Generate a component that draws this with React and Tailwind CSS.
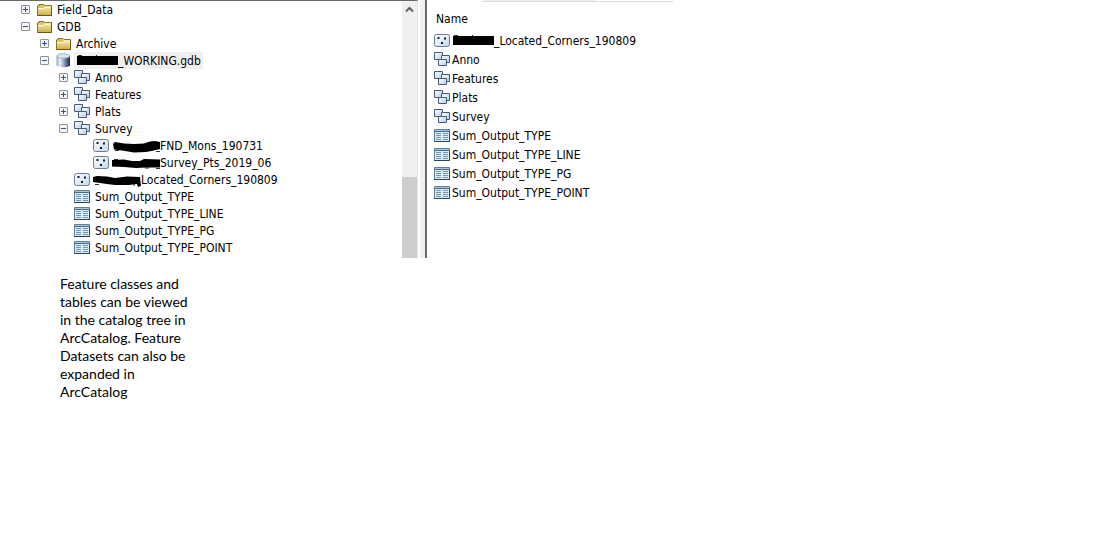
import React from "react";

function FolderIcon() {
  return (
    <svg width="16" height="16" viewBox="-1 0 16 16" className="shrink-0" aria-hidden="true">
      <defs>
        <linearGradient id="folder" x1="0" y1="0" x2="0" y2="1">
          <stop offset="0" stopColor="#f8ecac" />
          <stop offset="1" stopColor="#d2b04a" />
        </linearGradient>
      </defs>
      <path d="M.5 13.500V4l.5-.5h1v-1h5l1 1h6.500v10z" fill="#dcc263" stroke="#8a7220" />
      <path d="M1 13V6.500h5.500l1.500-2h6V13z" fill="url(#folder)" />
      <path d="M1 6.500h5.500l1.500-1.500h6" fill="none" stroke="#fffbe0" />
      <path d="M.5 13.500h14V4" fill="none" stroke="#6b5816" />
    </svg>
  );
}

function DatabaseIcon() {
  return (
    <svg width="16" height="16" viewBox="-1 0 16 16" className="shrink-0" aria-hidden="true">
      <defs>
        <linearGradient id="cylinder">
          <stop offset="0" stopColor="#8c9fba" />
          <stop offset=".25" stopColor="#f0f5fa" />
          <stop offset=".6" stopColor="#8296b4" />
          <stop offset="1" stopColor="#17253f" />
        </linearGradient>
      </defs>
      <path d="M.5 3v9c0 3 13.500 3 13.500 0V3z" fill="url(#cylinder)" />
      <ellipse cx="7.250" cy="3" rx="6.500" ry="2.300" fill="#dbe5f0" stroke="#8798b2" strokeWidth=".7" />
    </svg>
  );
}

function DatasetIcon() {
  return (
    <svg width="16" height="16" viewBox="0 0 16 16" className="shrink-0" aria-hidden="true">
      <defs>
        <linearGradient id="pane" x1="0" y1="0" x2="1" y2="1">
          <stop offset="0" stopColor="#ffffff" />
          <stop offset="1" stopColor="#b4cdec" />
        </linearGradient>
      </defs>
      <g fill="url(#pane)" stroke="#475a76">
        <path d="M.5.500h8v7h-8z" />
        <path d="M7.500 3.500h8v7h-8z" />
        <path d="M4.500 7.500h8v6h-8z" />
      </g>
    </svg>
  );
}

function PointsIcon() {
  return (
    <svg width="16" height="16" viewBox="0 0 16 16" className="shrink-0" aria-hidden="true">
      <defs>
        <linearGradient id="points" x1="0" y1="0" x2="1" y2="1">
          <stop offset="0" stopColor="#ffffff" />
          <stop offset="1" stopColor="#c3d6ee" />
        </linearGradient>
      </defs>
      <rect x=".5" y="1.500" width="15" height="12" rx="2" fill="url(#points)" stroke="#6c7c98" />
      <path d="M3.500 4h2v2h-2zM10 4.500h2v2h-2zM7 9h2v2H7z" fill="#111827" />
    </svg>
  );
}

function TableIcon() {
  return (
    <svg width="16" height="16" viewBox="0 0 16 16" className="shrink-0" aria-hidden="true">
      <path d="M.5 1.500h15v12H.5z" fill="#d9ecfa" stroke="#5c7f9c" />
      <path d="M1 2h14v1H1z" fill="#a9c6dc" />
      <path d="M0 3.500h16" stroke="#4a6d8a" />
      <path d="M15.500 4v9.500H0" fill="none" stroke="#2c4558" />
      <path d="M2 5.500h5M2 7.500h5M2 9.500h5M2 11.500h5M9 5.500h5M9 7.500h5M9 9.500h5M9 11.500h5" stroke="#7795ae" />
    </svg>
  );
}

const ICONS = {
  folder: FolderIcon,
  database: DatabaseIcon,
  dataset: DatasetIcon,
  points: PointsIcon,
  table: TableIcon,
};

const MARKS = {
  bar: "M1 3h41v9H1z",
  brushA: "M1 6l2-2 9 1.500 10 .5 10-.5 6-2 5-.5 5 1v7l-6 1.500-8 1.500-12 .5-12-2-8-1z",
  brushB: "M0 5l12-.5 8 1.500 8 0 4-2 16 .5v8h-14l-10 .5-12-1-12-.5z",
  brushC: "M0 5l4-1 10 .5 8 1.500 12-1.500 13 .5 1 9-3 1-1-3-8 1-14 0-8-1-14-2z",
};

const SPECKS = {
  bar: "M2 2.500h4M20 2.500h1",
  brushA: "M3 12.500h4M44 13.500h4",
  brushB: "M2 4.500h4M33 13h4M44 13.500h4",
  brushC: "M2 12.500h4M40 13h2",
};

function Redaction({ shape }) {
  return (
    <svg
      width={shape === "bar" ? 42 : 48}
      height="16"
      viewBox={shape === "bar" ? "0 0 42 16" : "0 0 48 16"}
      className="shrink-0"
      role="img"
      aria-label="Redacted"
    >
      <path d={SPECKS[shape]} stroke="#333333" />
      <path d={MARKS[shape]} fill="#000000" />
    </svg>
  );
}

function Expander({ open, label }) {
  return (
    <button
      type="button"
      aria-expanded={open}
      aria-label={(open ? "Collapse " : "Expand ") + label}
      className="size-[9px] shrink-0"
    >
      <svg width="9" height="9" viewBox="0 0 9 9" className="block" aria-hidden="true">
        <rect x=".5" y=".5" width="8" height="8" rx=".5" fill="#f6f6f6" stroke="#919191" />
        <path d="M2 4.500h5" stroke="#2f4fa5" />
        {!open && <path d="M4.500 2v5" stroke="#2f4fa5" />}
      </svg>
    </button>
  );
}

const TREE = [
  { icon: "folder", name: "Field_Data", open: false },
  {
    icon: "folder",
    name: "GDB",
    open: true,
    children: [
      { icon: "folder", name: "Archive", open: false },
      {
        icon: "database",
        name: "_WORKING.gdb",
        mark: "bar",
        selected: true,
        open: true,
        children: [
          { icon: "dataset", name: "Anno", open: false },
          { icon: "dataset", name: "Features", open: false },
          { icon: "dataset", name: "Plats", open: false },
          {
            icon: "dataset",
            name: "Survey",
            open: true,
            children: [
              { icon: "points", name: "FND_Mons_190731", mark: "brushA" },
              { icon: "points", name: "Survey_Pts_2019_06", mark: "brushB" },
            ],
          },
          { icon: "points", name: "Located_Corners_190809", mark: "brushC" },
          { icon: "table", name: "Sum_Output_TYPE" },
          { icon: "table", name: "Sum_Output_TYPE_LINE" },
          { icon: "table", name: "Sum_Output_TYPE_PG" },
          { icon: "table", name: "Sum_Output_TYPE_POINT" },
        ],
      },
    ],
  },
];

const CONTENTS = [
  { icon: "points", name: "_Located_Corners_190809", mark: "bar" },
  { icon: "dataset", name: "Anno" },
  { icon: "dataset", name: "Features" },
  { icon: "dataset", name: "Plats" },
  { icon: "dataset", name: "Survey" },
  { icon: "table", name: "Sum_Output_TYPE" },
  { icon: "table", name: "Sum_Output_TYPE_LINE" },
  { icon: "table", name: "Sum_Output_TYPE_PG" },
  { icon: "table", name: "Sum_Output_TYPE_POINT" },
];

function labelClass(node) {
  if (node.selected) return "bg-[#f0f0f0] px-0.5";
  return node.mark ? "" : "px-0.5";
}

function TreeNode({ node }) {
  const Icon = ICONS[node.icon];
  const expandable = node.open !== undefined;
  return (
    <li>
      <div className="flex h-[17px] items-center">
        <span className="flex w-[15px] shrink-0">
          {expandable && <Expander open={node.open} label={node.name} />}
        </span>
        <Icon />
        <span className={"ml-[3px] flex h-full items-center whitespace-nowrap " + labelClass(node)}>
          {node.mark && <Redaction shape={node.mark} />}
          {node.name}
        </span>
      </div>
      {node.children && (
        <ul className="pl-[19px]">
          {node.children.map((child) => (
            <TreeNode key={child.name} node={child} />
          ))}
        </ul>
      )}
    </li>
  );
}

function ScrollBar() {
  return (
    <div className="flex w-[15px] shrink-0 flex-col bg-[#f0f0f0]">
      <button type="button" aria-label="Scroll up" className="flex h-[17px] items-center justify-center">
        <svg width="9" height="7" viewBox="0 0 9 7" aria-hidden="true">
          <path d="M1 5.500L4.500 2 8 5.500" fill="none" stroke="#606060" strokeWidth="2" />
        </svg>
      </button>
      <div className="h-[159px]" />
      <div className="flex-1 bg-[#cdcdcd]" />
    </div>
  );
}

export default function App() {
  return (
    <main className="min-h-screen bg-white font-['DejaVu_Sans_Condensed','Open_Sans',sans-serif] text-xs text-black">
      <div className="flex">
        <nav aria-label="Catalog tree" className="flex w-[418px] shrink-0 border-t border-r border-t-[#696969] border-r-[#e3e3e3]">
          <ul className="flex-1 pb-0.5 pl-[21px]">
            {TREE.map((node) => (
              <TreeNode key={node.name} node={node} />
            ))}
          </ul>
          <ScrollBar />
        </nav>
        <div className="ml-0.5 w-[7px] shrink-0 border-r-2 border-[#696969] bg-[#f0f0f0]" />
        <section aria-label="Contents" className="flex-1 pl-[7px]">
          <div className="ml-[49px] flex h-[2px] max-w-[190px] border-b border-[#d9d9d9]">
            <div className="w-[112px] bg-[#f0f0f0]" />
          </div>
          <h2 className="flex h-[29px] items-center pt-1 pl-0.5 font-normal">Name</h2>
          <ul>
            {CONTENTS.map((item) => {
              const Icon = ICONS[item.icon];
              return (
                <li key={item.name} className="flex h-[19px] items-center gap-0.5 whitespace-nowrap">
                  <Icon />
                  <span className="flex items-center">
                    {item.mark && <Redaction shape={item.mark} />}
                    {item.name}
                  </span>
                </li>
              );
            })}
          </ul>
        </section>
      </div>
      <p className="mt-[17px] ml-[60px] w-[136px] font-['Lato',sans-serif] text-sm leading-[18px]">
        Feature classes and tables can be viewed in the catalog tree in ArcCatalog. Feature Datasets can also be
        expanded in ArcCatalog
      </p>
    </main>
  );
}
